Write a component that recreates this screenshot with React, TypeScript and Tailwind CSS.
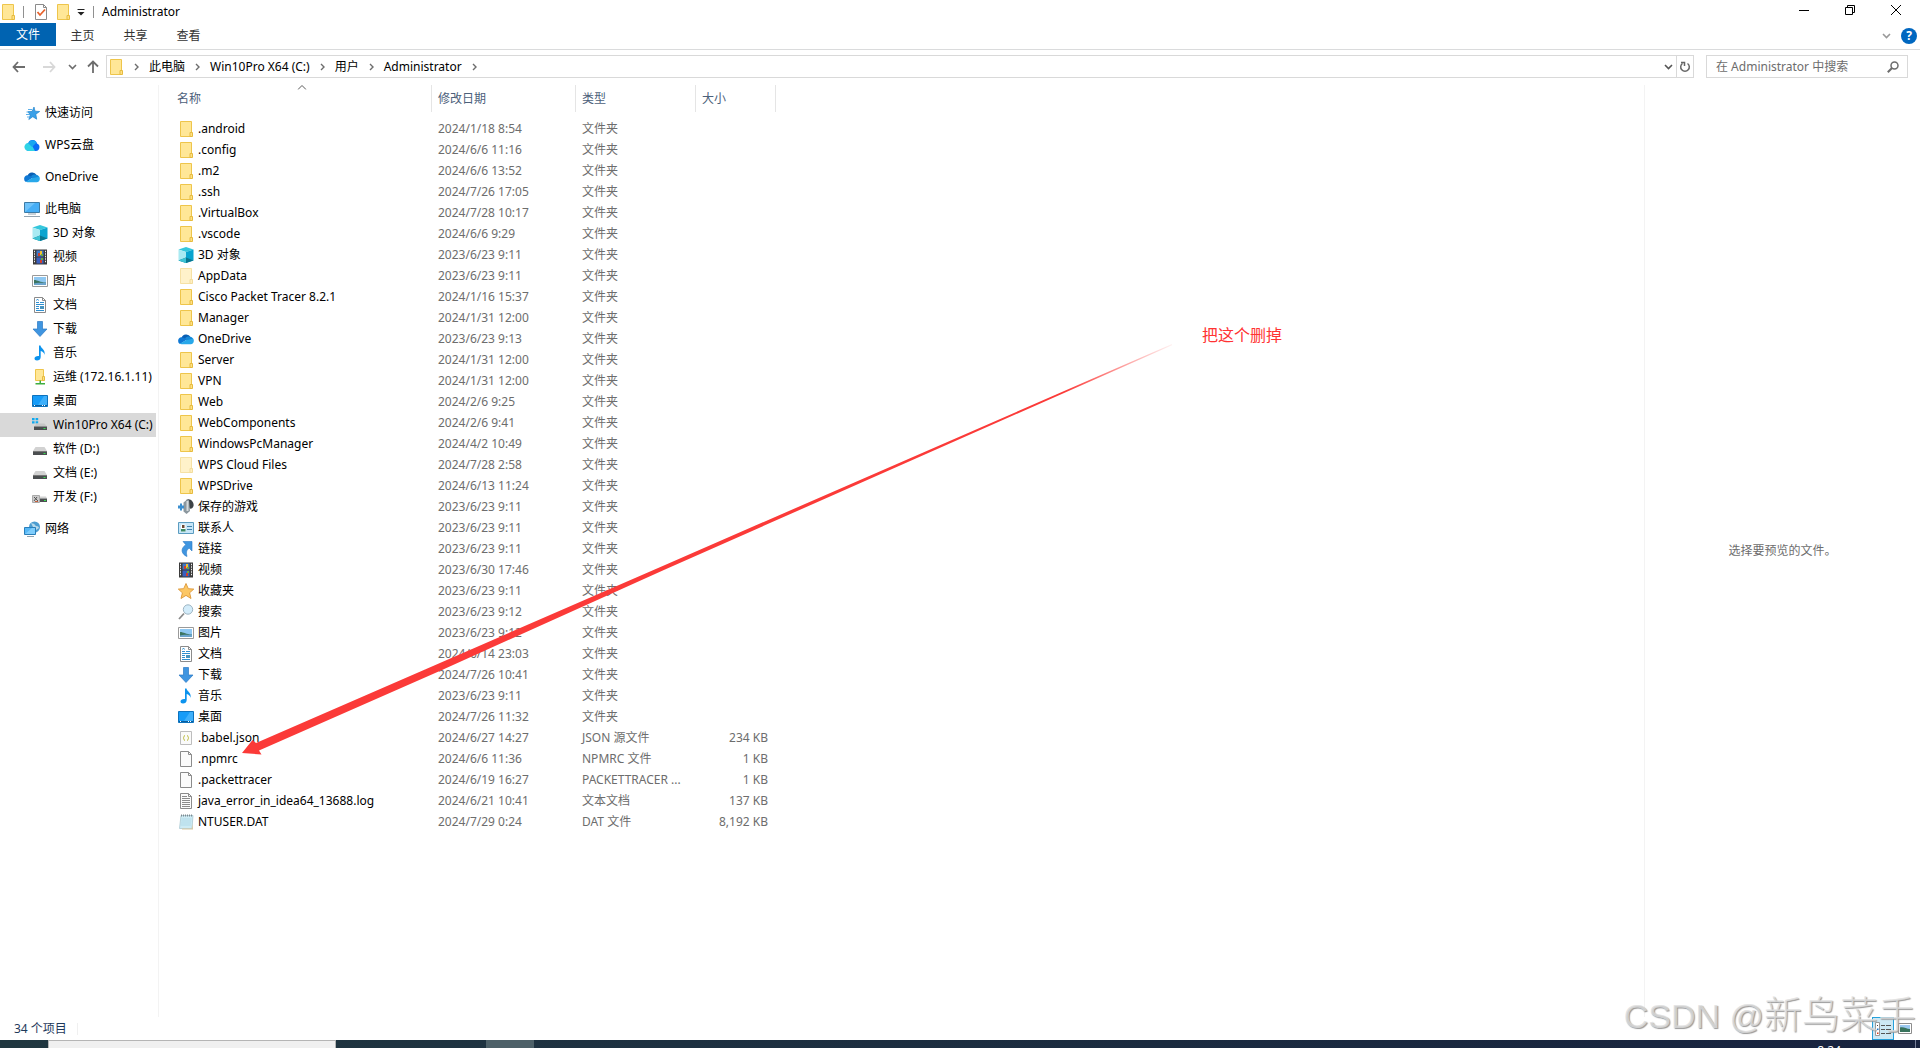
import type { ReactNode } from 'react';

type IconName =
  | 'folder'
  | 'folderFaded'
  | 'quick'
  | 'wps'
  | 'onedrive'
  | 'pc'
  | 'cube'
  | 'video'
  | 'picture'
  | 'doc'
  | 'download'
  | 'music'
  | 'netFolder'
  | 'desktop'
  | 'sysDrive'
  | 'drive'
  | 'devDrive'
  | 'network'
  | 'games'
  | 'contacts'
  | 'link'
  | 'star'
  | 'search'
  | 'json'
  | 'file'
  | 'log'
  | 'dat';

interface FileRow {
  icon: IconName;
  name: string;
  date: string;
  type: string;
  size?: string;
}

interface TreeItem {
  icon: IconName;
  label: string;
  child?: boolean;
  gap?: boolean;
  selected?: boolean;
}

const folder = '文件夹';

const files: FileRow[] = [
  { icon: 'folder', name: '.android', date: '2024/1/18 8:54', type: folder },
  { icon: 'folder', name: '.config', date: '2024/6/6 11:16', type: folder },
  { icon: 'folder', name: '.m2', date: '2024/6/6 13:52', type: folder },
  { icon: 'folder', name: '.ssh', date: '2024/7/26 17:05', type: folder },
  { icon: 'folder', name: '.VirtualBox', date: '2024/7/28 10:17', type: folder },
  { icon: 'folder', name: '.vscode', date: '2024/6/6 9:29', type: folder },
  { icon: 'cube', name: '3D 对象', date: '2023/6/23 9:11', type: folder },
  { icon: 'folderFaded', name: 'AppData', date: '2023/6/23 9:11', type: folder },
  { icon: 'folder', name: 'Cisco Packet Tracer 8.2.1', date: '2024/1/16 15:37', type: folder },
  { icon: 'folder', name: 'Manager', date: '2024/1/31 12:00', type: folder },
  { icon: 'onedrive', name: 'OneDrive', date: '2023/6/23 9:13', type: folder },
  { icon: 'folder', name: 'Server', date: '2024/1/31 12:00', type: folder },
  { icon: 'folder', name: 'VPN', date: '2024/1/31 12:00', type: folder },
  { icon: 'folder', name: 'Web', date: '2024/2/6 9:25', type: folder },
  { icon: 'folder', name: 'WebComponents', date: '2024/2/6 9:41', type: folder },
  { icon: 'folder', name: 'WindowsPcManager', date: '2024/4/2 10:49', type: folder },
  { icon: 'folderFaded', name: 'WPS Cloud Files', date: '2024/7/28 2:58', type: folder },
  { icon: 'folder', name: 'WPSDrive', date: '2024/6/13 11:24', type: folder },
  { icon: 'games', name: '保存的游戏', date: '2023/6/23 9:11', type: folder },
  { icon: 'contacts', name: '联系人', date: '2023/6/23 9:11', type: folder },
  { icon: 'link', name: '链接', date: '2023/6/23 9:11', type: folder },
  { icon: 'video', name: '视频', date: '2023/6/30 17:46', type: folder },
  { icon: 'star', name: '收藏夹', date: '2023/6/23 9:11', type: folder },
  { icon: 'search', name: '搜索', date: '2023/6/23 9:12', type: folder },
  { icon: 'picture', name: '图片', date: '2023/6/23 9:12', type: folder },
  { icon: 'doc', name: '文档', date: '2024/6/14 23:03', type: folder },
  { icon: 'download', name: '下载', date: '2024/7/26 10:41', type: folder },
  { icon: 'music', name: '音乐', date: '2023/6/23 9:11', type: folder },
  { icon: 'desktop', name: '桌面', date: '2024/7/26 11:32', type: folder },
  { icon: 'json', name: '.babel.json', date: '2024/6/27 14:27', type: 'JSON 源文件', size: '234 KB' },
  { icon: 'file', name: '.npmrc', date: '2024/6/6 11:36', type: 'NPMRC 文件', size: '1 KB' },
  { icon: 'file', name: '.packettracer', date: '2024/6/19 16:27', type: 'PACKETTRACER ...', size: '1 KB' },
  { icon: 'log', name: 'java_error_in_idea64_13688.log', date: '2024/6/21 10:41', type: '文本文档', size: '137 KB' },
  { icon: 'dat', name: 'NTUSER.DAT', date: '2024/7/29 0:24', type: 'DAT 文件', size: '8,192 KB' },
];

const tree: TreeItem[] = [
  { icon: 'quick', label: '快速访问' },
  { icon: 'wps', label: 'WPS云盘', gap: true },
  { icon: 'onedrive', label: 'OneDrive', gap: true },
  { icon: 'pc', label: '此电脑', gap: true },
  { icon: 'cube', label: '3D 对象', child: true },
  { icon: 'video', label: '视频', child: true },
  { icon: 'picture', label: '图片', child: true },
  { icon: 'doc', label: '文档', child: true },
  { icon: 'download', label: '下载', child: true },
  { icon: 'music', label: '音乐', child: true },
  { icon: 'netFolder', label: '运维 (172.16.1.11)', child: true },
  { icon: 'desktop', label: '桌面', child: true },
  { icon: 'sysDrive', label: 'Win10Pro X64 (C:)', child: true, selected: true },
  { icon: 'drive', label: '软件 (D:)', child: true },
  { icon: 'drive', label: '文档 (E:)', child: true },
  { icon: 'devDrive', label: '开发 (F:)', child: true },
  { icon: 'network', label: '网络', gap: true },
];

const crumbs = ['此电脑', 'Win10Pro X64 (C:)', '用户', 'Administrator'];

const folderShape = (
  <>
    <path d="M2.500.5h11v15h-11z" fill="#ffe797" stroke="#eec54b" />
    <path d="M12 11.500h2.500v4H12z" fill="#ffe084" stroke="#e6bb3f" />
  </>
);

const driveShape = (
  <>
    <path d="M3.500 6h9l2.500 4H1z" fill="#d2d2d2" />
    <path d="M1 10h14v4H1z" fill="#4b4e50" />
    <path d="M1 10h14v1H1z" fill="#777" />
    <path d="M11.500 12h2v1h-2z" fill="#35e04d" />
  </>
);

const icons: Record<IconName, ReactNode> = {
  folder: folderShape,
  folderFaded: <g opacity="0.5">{folderShape}</g>,
  quick: (
    <>
      <path d="M10 2l1 4.200 4.700.3-3.900 2.700.9 5-3.900-2.500-4 2.800L6.300 10 4 6.700l4.200-.4z" fill="#3aa0e8" stroke="#2184cd" strokeWidth="0.700" />
      <path d="M4 4.500h4M2.500 7h4M2 9.500h4M3 12h3" stroke="#4aa6e6" strokeWidth="0.900" />
    </>
  ),
  wps: (
    <>
      <path d="M4.500 14a4 4 0 0 1-.3-7.800A4.600 4.600 0 0 1 13 6.500 3.900 3.900 0 0 1 12 14z" fill="#0a6cf5" />
      <path d="M4.500 14a4 4 0 1 1 2.800-6.800L11 14z" fill="#2fd3e6" />
      <path d="M4.200 6.200A4.600 4.600 0 0 1 12.500 5.500L8 10z" fill="#18a6f0" />
    </>
  ),
  onedrive: (
    <>
      <path d="M3.500 7A5 5 0 0 1 12.600 6L9 9z" fill="#0a5fb4" />
      <path d="M.2 10.200A3.400 3.400 0 0 1 3.500 6.200c2 0 3.200 1 5.500 2.400L2 13C1 12.500.2 11.500.2 10.200z" fill="#0f78d4" />
      <path d="M9 8.500c1-1.800 2-2.500 3.300-2.600A3.700 3.700 0 0 1 15.800 10c0 2-1.300 3.200-3 3.200H3.500c-.8 0-1.200-.2-1.700-.5z" fill="#28a8ea" />
      <path d="M7 7.500c1.500-2 3.500-2.400 5.500-1.600 1 .3 1.800 1 2.200 1.900L9.500 9z" fill="#1588d8" />
    </>
  ),
  pc: (
    <>
      <path d="M.5 1.500h15v10H.5z" fill="#6fc3fa" stroke="#3c7ba6" />
      <path d="M1 11L11 2h4v9z" fill="#46aef6" />
      <path d="M4 12.500h8v1H4zM0 15h16v1H0z" fill="#94a4b0" />
    </>
  ),
  cube: (
    <>
      <path d="M8 0l7.500 2.500L8 5 .5 2.500z" fill="#35c7dc" />
      <path d="M.5 2.500L8 5v11L.5 13.500z" fill="#a9eaf2" />
      <path d="M15.500 2.500L8 5v11l7.500-2.500z" fill="#0aa4cf" />
      <path d="M.5 13.500L8 10.500l7.500 3L8 16z" fill="#08768f" />
      <path d="M.5 13.500L8 10.500V16z" fill="#3dc3d4" />
    </>
  ),
  video: (
    <>
      <path d="M1 .5h14v15H1z" fill="#3b3b3b" />
      <path d="M4.500 1.500h7v6h-7z" fill="#3f78c8" />
      <path d="M4.500 8.500h7v6h-7z" fill="#3a5fc0" />
      <path d="M8 2h2v4H8z" fill="#f2c230" />
      <path d="M6 4h2v3H6zM8 11h2v3H8z" fill="#d0402c" />
      <path d="M9 5h2v2H9zM9 9h2v2H9z" fill="#6dab3c" />
      <path d="M2 2.500h1M2 5h1M2 7.500h1M2 10h1M2 12.500h1M13 2.500h1M13 5h1M13 7.500h1M13 10h1M13 12.500h1" stroke="#eee" strokeWidth="1.300" />
    </>
  ),
  picture: (
    <>
      <path d="M.5 2.500h15v11H.5z" fill="#fff" stroke="#9a9a9a" />
      <path d="M2 4h12v8H2z" fill="#8fc8f2" />
      <path d="M2 7c4 0 6 2.500 12 2.500V12H2z" fill="#3c7561" />
      <path d="M2 10.500c4-1.500 8 0 12-1V12H2z" fill="#6ba4cc" />
    </>
  ),
  doc: (
    <>
      <path d="M2.500.5h8l3 3v12h-11z" fill="#fff" stroke="#8b8b8b" />
      <path d="M10.500.5v3h3" fill="none" stroke="#8b8b8b" />
      <path d="M4 5.500h3M8 5.500h4M4 7.500h8M4 9.500h3M4 11.500h3M4 13.500h8" stroke="#2f8fd0" />
      <path d="M8 9h4v3H8z" fill="#4794bf" />
      <path d="M4.500 3.500l1-1.500 1 1.500" stroke="#2f8fd0" fill="none" />
    </>
  ),
  download: <path d="M5.500.5h5v7.500H15L8 15.500 1 8h4.500z" fill="#3f95e0" stroke="#2a79c4" strokeWidth="0.700" />,
  music: (
    <path d="M7 .5h1.500c.4 3 5 4 4.200 9.500-.4-2-2-3.500-4-4V12c0 2.300-1.800 3.600-3.700 3.600-1.600 0-2.500-.9-2.500-2 0-1.600 2-2.900 4.500-2.500z" fill="#0c93ee" />
  ),
  netFolder: (
    <>
      <path d="M3.500.5h8v11h-8z" fill="#ffe797" stroke="#eec54b" />
      <path d="M10.500 7.500h2v4h-2z" fill="#ffe084" stroke="#e6bb3f" />
      <path d="M7.500 11.500h1.500V14H13v1.500H3.500V14h4z" fill="#3fae3f" />
    </>
  ),
  desktop: (
    <>
      <path d="M.5 2.500h15v11H.5z" fill="#169cf8" stroke="#0d72bd" />
      <path d="M6 12L12 3h3v9z" fill="#3eb0fb" />
      <path d="M1 12h14v1H1z" fill="#0a5d9c" />
      <path d="M2 12h1v1H2zM10 12h1v1h-1zM12 12h1v1h-1z" fill="#fff" />
    </>
  ),
  sysDrive: (
    <>
      <path d="M0 1h2.600v2.200H0zM3.600 1h2.600v2.200H3.600zM0 4.200h2.600v2.200H0zM3.600 4.200h2.600v2.200H3.600z" fill="#11a9ee" />
      <path d="M4.500 6.500h8l2.500 3H2z" fill="#c6c6c6" />
      <path d="M2 9.500h13V13H2z" fill="#4b4e50" />
      <path d="M11.500 11h2v1h-2z" fill="#35e04d" />
    </>
  ),
  drive: driveShape,
  devDrive: (
    <>
      <path d="M8 7.500h6l1 2H8z" fill="#d2d2d2" />
      <path d="M8 9.500h7V13H8z" fill="#4b4e50" />
      <path d="M12 11h2v1h-2z" fill="#35e04d" />
      <path d="M.5 6.500h7v7h-7z" fill="#ccc" stroke="#aaa" />
      <path d="M2 8l4 4M2 12l3-4" stroke="#555" />
      <path d="M3 12h3v1H3z" fill="#c8603c" />
    </>
  ),
  network: (
    <>
      <circle cx="10.500" cy="6" r="5.500" fill="#4d9dd0" />
      <path d="M7 2c2 1 3 0 4 2s3 0 4 3l-3 2-3-3z" fill="#b8d9ea" />
      <path d="M.5 6.500h11v7H.5z" fill="#56b8f7" stroke="#2a7fba" />
      <path d="M1 13L8 7h3v6z" fill="#7fcdfc" />
      <path d="M3 15h7v1H3z" fill="#8fa3b0" />
    </>
  ),
  games: (
    <>
      <path d="M8 1c3-1.500 5 0 6 1s2 3 1.500 5-2 3-4 2.500z" fill="#3d4347" />
      <path d="M5.500 3.500l3-2.500h2.500l1 11-3.500 3-3-2.500z" fill="#8b979e" />
      <path d="M8.500 2h2v10h-2z" fill="#d5dadd" />
      <path d="M0 6.500h2V4.500h2v2h2v3H4v2H2v-2H0z" fill="#3b8fd0" />
    </>
  ),
  contacts: (
    <>
      <path d="M.5 2.500h15v11H.5z" fill="#c7e6f8" stroke="#5b9cc0" />
      <path d="M3 4.500h4.500v7H3z" fill="#fff" />
      <path d="M4 5h2.500v3H4z" fill="#6b4a35" />
      <path d="M3 9h4.500v2.500H3z" fill="#3c8a62" />
      <path d="M9 6.500h5M9 9.500h5" stroke="#4183ad" />
    </>
  ),
  link: <path d="M5 .5h9V10l-2.700-2.700C8.500 8.500 8 11 9 15.500 4 13.500 1.500 8 7.800 3.700z" fill="#3f95e0" stroke="#2a79c4" strokeWidth="0.600" />,
  star: <path d="M8 .5l2.300 5.200 5.500.4-4.200 3.700 1.400 5.700L8 12.400 3 15.500l1.400-5.700L.3 6.100l5.400-.4z" fill="#fcc765" stroke="#dd9638" strokeWidth="0.900" />,
  search: (
    <>
      <path d="M1 15l5-5.500" stroke="#8a8a8a" strokeWidth="1.800" />
      <circle cx="10" cy="5.500" r="4.700" fill="#d3ecfa" stroke="#9db4c2" />
    </>
  ),
  json: (
    <>
      <path d="M2.500 1.500h11v13h-11z" fill="#fafafa" stroke="#bdbdbd" />
      <path d="M7 5.500c-1.500 0-.5 2-1.800 2.500C6.500 8.500 5.500 10.500 7 10.500M9 5.500c1.500 0 .5 2 1.800 2.500-1.300.5-.3 2.500-1.800 2.500" fill="none" stroke="#b8b832" />
    </>
  ),
  file: (
    <>
      <path d="M2.500.5h8l3 3v12h-11z" fill="#fbfbfb" stroke="#8b8b8b" />
      <path d="M10.500.5v3h3" fill="none" stroke="#8b8b8b" />
    </>
  ),
  log: (
    <>
      <path d="M2.500.5h8l3 3v12h-11z" fill="#fbfbfb" stroke="#8b8b8b" />
      <path d="M10.500.5v3h3" fill="none" stroke="#8b8b8b" />
      <path d="M4 3.500h5M4 5.500h8M4 7.500h8M4 9.500h8M4 11.500h8M4 13.500h8" stroke="#8b8b8b" />
    </>
  ),
  dat: (
    <>
      <path d="M3 1.500h12l-1 13H1.500z" fill="#cdebf4" stroke="#a9c8d2" strokeWidth="0.800" />
      <path d="M3.500 5h10M3.300 7h10M3 9h10M2.800 11h10" stroke="#a6d3e2" strokeWidth="0.700" />
      <path d="M3 1.500h12" stroke="#7d8a90" strokeDasharray="1 1" strokeWidth="2" />
      <path d="M14 14.500l1-5v6H4v-1z" fill="#d9c9a2" />
    </>
  ),
};

function Icon({ name }: { name: IconName }) {
  return (
    <svg viewBox="0 0 16 16" className="size-4 shrink-0" aria-hidden="true">
      {icons[name]}
    </svg>
  );
}

function Chevron({ down = false }: { down?: boolean }) {
  return down ? (
    <svg viewBox="0 0 9 6" className="h-1.5 w-[9px] shrink-0" fill="none" stroke="currentColor" strokeWidth="1.600">
      <path d="M1 1l3.500 3.500L8 1" />
    </svg>
  ) : (
    <svg viewBox="0 0 5 8" className="mx-2.5 h-2 w-[5px] shrink-0" fill="none" stroke="#6d6d6d" strokeWidth="1.400">
      <path d="M1 1l3 3-3 3" />
    </svg>
  );
}

function TitleBar() {
  return (
    <header className="flex h-[23px] items-center">
      <div className="flex flex-1 items-center">
        <Icon name="folder" />
        <span className="mx-[7px] h-3 w-px bg-[#909090]" />
        <button className="ml-[2px]" aria-label="属性">
          <svg viewBox="0 0 16 16" className="size-4">
            <path d="M2.500.5h8l3 3v12h-11z" fill="#fff" stroke="#8b8b8b" />
            <path d="M10.500.5v3h3" fill="none" stroke="#8b8b8b" />
            <path d="M4.500 8l2.500 3 5-5.500" fill="none" stroke="#e8622c" strokeWidth="1.800" />
          </svg>
        </button>
        <button className="ml-1.5" aria-label="新建文件夹">
          <Icon name="folder" />
        </button>
        <button className="ml-1.5" aria-label="自定义快速访问工具栏">
          <svg viewBox="0 0 8 8" className="size-2">
            <path d="M.5 1h7v1h-7zM.5 4h7L4 7.500z" fill="#222" />
          </svg>
        </button>
        <span className="mx-2 h-3 w-px bg-[#909090]" />
        <h1>Administrator</h1>
      </div>
      <div className="flex self-start text-black">
        <button className="flex h-5 w-[46px] items-center justify-center" aria-label="最小化">
          <svg viewBox="0 0 10 10" className="size-2.5">
            <path d="M0 5.500h10" stroke="currentColor" />
          </svg>
        </button>
        <button className="flex h-5 w-[46px] items-center justify-center" aria-label="还原">
          <svg viewBox="0 0 10 10" className="size-2.5" fill="none" stroke="currentColor">
            <path d="M.5 2.500h7v7h-7zM2.500 2.500v-2h7v7h-2" />
          </svg>
        </button>
        <button className="mr-px flex h-5 w-[46px] items-center justify-center" aria-label="关闭">
          <svg viewBox="0 0 10 10" className="size-2.5" stroke="currentColor">
            <path d="M0 0l10 10M10 0L0 10" />
          </svg>
        </button>
      </div>
    </header>
  );
}

function Ribbon() {
  return (
    <nav className="flex h-[27px] border-b border-[#dadbdc]">
      <button className="h-[23px] w-14 bg-[#0063b1] text-white">文件</button>
      {['主页', '共享', '查看'].map((tab) => (
        <button key={tab} className="h-[26px] w-[53px] text-[#333]">
          {tab}
        </button>
      ))}
      <div className="ml-auto flex items-center gap-2.5 pr-[3px] text-[#999]">
        <button aria-label="展开功能区">
          <Chevron down />
        </button>
        <button aria-label="帮助" className="flex size-4 items-center justify-center rounded-full bg-[#0067c0] text-xs font-bold text-white">
          ?
        </button>
      </div>
    </nav>
  );
}

function AddressBar() {
  return (
    <div className="flex h-[35px] items-center pr-3 pt-1 pb-1.5">
      <div className="flex w-[106px] shrink-0 items-center pl-3 text-[#6d6d6d]">
        <button aria-label="后退">
          <svg viewBox="0 0 14 12" className="h-3 w-3.5" fill="none" stroke="currentColor" strokeWidth="1.800">
            <path d="M6 1L1.500 6 6 11M1.500 6H13" />
          </svg>
        </button>
        <button aria-label="前进" className="ml-4 text-[#d8d8d8]">
          <svg viewBox="0 0 14 12" className="h-3 w-3.5" fill="none" stroke="currentColor" strokeWidth="1.800">
            <path d="M8 1l4.500 5L8 11M12.500 6H1" />
          </svg>
        </button>
        <button aria-label="最近浏览的位置" className="ml-3">
          <Chevron down />
        </button>
        <button aria-label="上移" className="ml-2.5">
          <svg viewBox="0 0 12 14" className="h-3.5 w-3" fill="none" stroke="currentColor" strokeWidth="1.800">
            <path d="M1 6.500l5-5 5 5M6 1.500V13" />
          </svg>
        </button>
      </div>
      <div className="flex h-[23px] min-w-0 flex-1 items-center border border-[#d9d9d9] pl-px">
        <Icon name="folder" />
        <Chevron />
        {crumbs.map((crumb) => (
          <span key={crumb} className="flex items-center">
            <a href="#" className="whitespace-nowrap">
              {crumb}
            </a>
            <Chevron />
          </span>
        ))}
        <button aria-label="以前的位置" className="mr-[3px] ml-auto text-[#555]">
          <Chevron down />
        </button>
        <button aria-label="刷新" className="flex h-full w-[17px] items-center justify-center border-l border-[#d9d9d9] text-[#666]">
          <svg viewBox="0 0 12 12" className="size-3" fill="none" stroke="currentColor" strokeWidth="1.500">
            <path d="M8.500 2.500a4.300 4.300 0 1 1-5 0M2 1.500h3.500V5" />
          </svg>
        </button>
      </div>
      <label className="ml-3 flex h-[23px] w-[202px] items-center border border-[#d9d9d9] pr-2 pl-[9px]">
        <input
          type="search"
          aria-label="搜索"
          placeholder="在 Administrator 中搜索"
          className="min-w-0 flex-1 outline-none placeholder:text-[#6d6d6d]"
        />
        <svg viewBox="0 0 12 12" className="size-3" fill="none" stroke="#6d6d6d" strokeWidth="1.500">
          <circle cx="7.500" cy="4.500" r="3.500" />
          <path d="M5 7L.8 11.200" strokeWidth="2" />
        </svg>
      </label>
    </div>
  );
}

function Sidebar() {
  return (
    <aside className="w-[159px] shrink-0 border-r border-[#f3f3f3] pt-4 pr-0.5">
      <ul>
        {tree.map((item) => (
          <li key={item.label} className={item.gap ? 'mt-2' : ''}>
            <a
              href="#"
              className={`flex h-6 items-center gap-[5px] overflow-hidden whitespace-nowrap ${
                item.child ? 'pl-8' : 'pl-6'
              } ${item.selected ? 'bg-[#d9d9d9]' : ''}`}
            >
              <Icon name={item.icon} />
              {item.label}
            </a>
          </li>
        ))}
      </ul>
    </aside>
  );
}

function FileTable() {
  return (
    <table className="table-fixed border-collapse">
      <colgroup>
        <col className="w-[261px]" />
        <col className="w-[144px]" />
        <col className="w-[120px]" />
        <col className="w-[80px]" />
      </colgroup>
      <thead>
        <tr>
          {['名称', '修改日期', '类型', '大小'].map((title, i) => (
            <th key={title} className="relative p-0 pb-1.5 font-normal">
              <button className="block h-[27px] w-full border-r border-[#e5e5e5] pl-1.5 text-left text-[#4c607a]">
                {title}
              </button>
              {i === 0 && (
                <svg viewBox="0 0 9 5" className="absolute top-0 left-1/2 h-[5px] w-[9px] -translate-x-1/2" fill="none" stroke="#5a5a5a">
                  <path d="M.5 4.500l4-4 4 4" />
                </svg>
              )}
            </th>
          ))}
        </tr>
      </thead>
      <tbody className="text-[#6d6d6d]">
        {files.map((file) => (
          <tr key={file.name} className="h-[21px] whitespace-nowrap">
            <td className="p-0">
              <div className="flex h-[21px] items-center gap-1 pl-[7px] text-black">
                <Icon name={file.icon} />
                {file.name}
              </div>
            </td>
            <td className="p-0 pl-1.5">{file.date}</td>
            <td className="p-0 pl-1.5">{file.type}</td>
            <td className="p-0 pr-2 text-right">{file.size}</td>
          </tr>
        ))}
      </tbody>
    </table>
  );
}

function StatusBar() {
  return (
    <footer className="flex h-[23px] items-center pl-3.5 text-[#1e395b]">
      <span className="border-r border-[#f0f0f0] pr-2.5 leading-3">34 个项目</span>
      <div className="mr-2 ml-auto flex items-center gap-1">
        <button aria-label="详细信息" className="flex h-[23px] w-[22px] items-center justify-center border border-[#26a0da] bg-[#cce8f4]">
          <svg viewBox="0 0 16 14" className="h-3.5 w-4" fill="none">
            <path d="M.5.5h4v13h-4z" fill="#fff" stroke="#999" />
            <path d="M6 3.500h4M11 3.500h5M6 7.500h4M11 7.500h5M6 11.500h4M11 11.500h5" stroke="#555" />
            <path d="M2 3h1v1H2z" fill="#444" />
            <path d="M2 6.500h1.500V8H2z" fill="#1979d2" />
            <path d="M2 10.500h1.500V12H2z" fill="#d23c1e" />
          </svg>
        </button>
        <button aria-label="大缩略图">
          <svg viewBox="0 0 14 11" className="h-[11px] w-3.5">
            <path d="M.5.5h13v10H.5z" fill="#fff" stroke="#8d8d8d" />
            <path d="M2 2h10v7H2z" fill="#9cc9f0" />
            <path d="M2 4.500c4-1 6 1.500 10 1.500v3H2z" fill="#38735c" />
          </svg>
        </button>
      </div>
    </footer>
  );
}

function Taskbar() {
  return (
    <div className="flex h-2 shrink-0 overflow-hidden bg-linear-to-r from-[#203740] to-[#18233f] pl-12">
      <div className="w-72 border-x border-t border-[#b5b5b5] bg-[#f0f0f0]" />
      <div className="ml-[150px] w-12 bg-[#4d6068]" />
      <time className="mr-[74px] ml-auto pt-[3px] text-white">8:24</time>
      <div className="mr-1 w-px bg-[#77809a]" />
    </div>
  );
}

// red marker drawn over the window, pointing at .npmrc
function Annotation() {
  return (
    <div className="pointer-events-none absolute top-0 left-0">
      <svg viewBox="0 0 1200 780" className="h-[780px] w-[1200px]">
        <defs>
          <linearGradient id="tail" gradientUnits="userSpaceOnUse" x1="600" y1="0" x2="1180" y2="0">
            <stop offset="0" stopColor="#fb3a38" />
            <stop offset="0.800" stopColor="#fb3a38" />
            <stop offset="1" stopColor="#fb3a38" stopOpacity="0" />
          </linearGradient>
        </defs>
        <path d="M242 753l10.500-13 3.500 3L425 669.500 665 565l507-221v1.200L665 569.500 442 670 259 750.500l2.500 4z" fill="url(#tail)" />
      </svg>
      <p className="absolute top-[323px] left-[1202px] text-base leading-6 whitespace-nowrap text-[#ff3333]">把这个删掉</p>
    </div>
  );
}

export default function App() {
  return (
    <div className="relative flex h-screen flex-col overflow-hidden bg-white font-['Noto_Sans','Noto_Sans_CJK_SC',sans-serif] text-xs text-black">
      <TitleBar />
      <Ribbon />
      <AddressBar />
      <div className="flex min-h-0 flex-1">
        <Sidebar />
        <main className="min-w-0 flex-1 pl-3">
          <FileTable />
        </main>
        <section className="flex w-[276px] shrink-0 items-center justify-center border-l border-[#f3f3f3] text-[#6d6d6d]">
          选择要预览的文件。
        </section>
      </div>
      <StatusBar />
      <Taskbar />
      <Annotation />
      <p className="pointer-events-none absolute right-1 bottom-2 font-['Liberation_Sans','Noto_Sans_CJK_SC',sans-serif] text-[34px] leading-12 font-light text-[#dedede]/80 [text-shadow:1px_1px_1px_#999999]">
        CSDN @<span className="text-[38px]">新鸟菜手</span>
      </p>
    </div>
  );
}
